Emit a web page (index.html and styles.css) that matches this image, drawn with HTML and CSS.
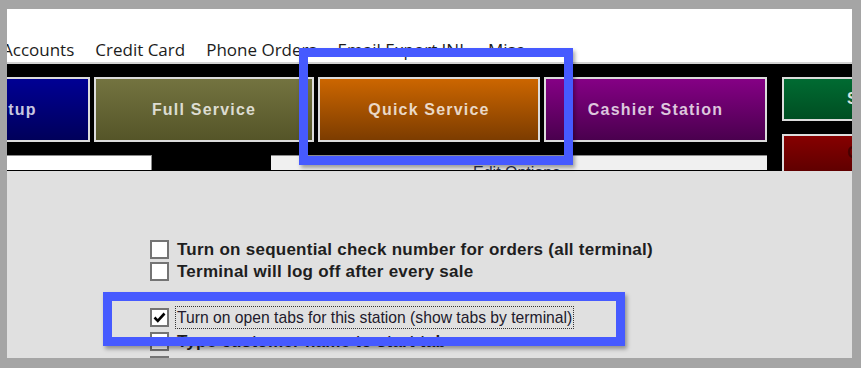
FILE: index.html
```html
<!DOCTYPE html>
<html>
<head>
<meta charset="utf-8">
<link rel="stylesheet" href="styles.css">
</head>
<body>
<div class="screen">
  <div class="window">
    <nav class="menubar">
      <span class="menu-item first">Accounts</span>
      <span class="menu-item">Credit Card</span>
      <span class="menu-item">Phone Orders</span>
      <span class="menu-item">Email Export INI</span>
      <span class="menu-item last">Misc</span>
    </nav>
    <div class="toolbar">
      <div class="toolbar-main">
        <div class="mode-row">
          <div class="mode-btn setup"><span>Setup</span></div>
          <div class="mode-btn full"><span>Full Service</span></div>
          <div class="mode-btn quick"><span>Quick Service</span></div>
          <div class="mode-btn cashier"><span>Cashier Station</span></div>
        </div>
        <div class="field-row">
          <div class="field field-white"></div>
          <div class="field field-options"><span class="options-label">Edit Options</span></div>
        </div>
      </div>
      <div class="toolbar-side">
        <div class="side-btn green"><span>S</span></div>
        <div class="side-btn red"><span>C</span></div>
      </div>
    </div>
    <div class="panel">
      <div class="opt-row">
        <span class="box"></span>
        <span class="opt-label bold">Turn on sequential check number for orders (all terminal)</span>
      </div>
      <div class="opt-row">
        <span class="box"></span>
        <span class="opt-label bold">Terminal will log off after every sale</span>
      </div>
      <div class="opt-row group">
        <span class="box checked">
          <svg viewBox="0 0 15 15" width="15" height="15"><path d="M2.5 7.5 L5.8 10.8 L12.5 3.5" fill="none" stroke="#000" stroke-width="2.6"/></svg>
        </span>
        <span class="opt-label focus">Turn on open tabs for this station (show tabs by terminal)</span>
      </div>
      <div class="opt-row">
        <span class="box"></span>
        <span class="opt-label bold">Type customer name to start tab</span>
      </div>
      <div class="opt-row">
        <span class="box"></span>
        <span class="opt-label bold">Require customer name</span>
      </div>
    </div>
  </div>
  <div class="highlight hl-top"></div>
  <div class="highlight hl-bottom"></div>
</div>
</body>
</html>
```

FILE: styles.css
```css
* { box-sizing: border-box; }
html, body { margin: 0; padding: 0; }
body { background: #a5a5a5; }

.screen {
  position: relative;
  width: 861px;
  height: 368px;
  padding: 9px 9px 10px 7px;
  background: #a5a5a5;
  overflow: hidden;
}

.window {
  height: 349px;
  background: #e0e0e0;
  overflow: hidden;
  display: flex;
  flex-direction: column;
}

.menubar {
  flex: 0 0 55px;
  background: #fff;
  border-bottom: 2px solid #d2d2d2;
  display: flex;
  gap: 21px;
  padding-top: 30px;
  font-family: "Open Sans", "Noto Sans", sans-serif;
  font-size: 17px;
  line-height: 22px;
  color: #1c1c1c;
  white-space: nowrap;
}
.menu-item.first { margin-left: -5px; }
.menu-item.last { margin-left: 3px; }

.toolbar {
  flex: 0 0 107px;
  background: #000;
  display: flex;
}
.toolbar-main {
  width: 760px;
  padding-top: 13px;
}
.mode-row {
  display: flex;
  gap: 4px;
  height: 65px;
}
.mode-btn {
  border: 2px solid #dcdcdc;
  display: flex;
  align-items: center;
  justify-content: center;
  font-family: "Liberation Sans", Arial, sans-serif;
  font-weight: bold;
  font-size: 16px;
  letter-spacing: 1.2px;
  color: rgba(255,255,255,0.78);
  white-space: nowrap;
}
.mode-btn.setup { flex: 0 0 157px; margin-left: -74px; background: linear-gradient(#000094, #00005a); }
.mode-btn.full { flex: 0 0 220px; background: linear-gradient(#737340, #555528); }
.mode-btn.quick { flex: 0 0 222px; background: linear-gradient(#cc6600, #7c3c00); }
.mode-btn.cashier { flex: 0 0 223px; background: linear-gradient(#850085, #4a004e); }

.field-row {
  display: flex;
  height: 15px;
  margin-top: 13px;
}
.field { height: 15px; border-top: 1px solid #8a8a8a; }
.field-white { width: 145px; background: #fff; border-right: 1px solid #8a8a8a; }
.field-options {
  width: 496px;
  margin-left: 119px;
  background: #f0f0f0;
  overflow: hidden;
  padding-left: 202px;
  padding-top: 9px;
}
.options-label {
  display: block;
  font-family: "Liberation Sans", Arial, sans-serif;
  font-size: 16px;
  line-height: 15px;
  color: #2a3250;
  white-space: nowrap;
}

.toolbar-side {
  width: 85px;
  padding-left: 15px;
  padding-top: 13px;
  display: flex;
  flex-direction: column;
  gap: 13px;
}
.side-btn {
  border: 2px solid #dcdcdc;
  border-right: none;
  display: flex;
  align-items: center;
  padding-left: 63px;
  font-family: "Liberation Sans", Arial, sans-serif;
  font-weight: bold;
  font-size: 16px;
  color: rgba(255,255,255,0.85);
  overflow: hidden;
}
.side-btn.green { height: 44px; background: linear-gradient(#006b32, #004e22); }
.side-btn.red { flex: 1; border-bottom: none; background: linear-gradient(#860000, #600000); color: rgba(0,0,0,0.4); align-items: flex-start; padding-top: 8px; }

.panel {
  flex: 1;
  padding-top: 69px;
  padding-left: 143px;
  display: flex;
  flex-direction: column;
}
.opt-row {
  display: flex;
  align-items: center;
  height: 19px;
  margin-bottom: 3px;
  white-space: nowrap;
}
.opt-row + .opt-row.group { margin-top: 24px; }
.opt-row.group { margin-bottom: 5px; }
.opt-row.group + .opt-row { margin-bottom: 5px; }

.box {
  flex: 0 0 19px;
  width: 19px;
  height: 19px;
  background: #fff;
  border: 2px solid #747474;
  display: flex;
  align-items: center;
  justify-content: center;
}
.opt-label {
  margin-left: 8px;
  font-family: "Liberation Sans", Arial, sans-serif;
  color: #1e1e1e;
}
.opt-label.bold {
  font-weight: bold;
  font-size: 17px;
  letter-spacing: 0.25px;
  line-height: 19px;
}
.opt-label.focus {
  margin-left: 6px;
  font-size: 15.7px;
  line-height: 21px;
  padding: 0 1px;
  border: 1px dotted #333;
  color: #221a2c;
}

.highlight {
  position: absolute;
  border: 9px solid #465aff;
  box-shadow: 2px 3px 4px rgba(0,0,0,0.35);
}
.hl-top { left: 299px; top: 48px; width: 274px; height: 117px; }
.hl-bottom { left: 103px; top: 292px; width: 522px; height: 54px; }
```
